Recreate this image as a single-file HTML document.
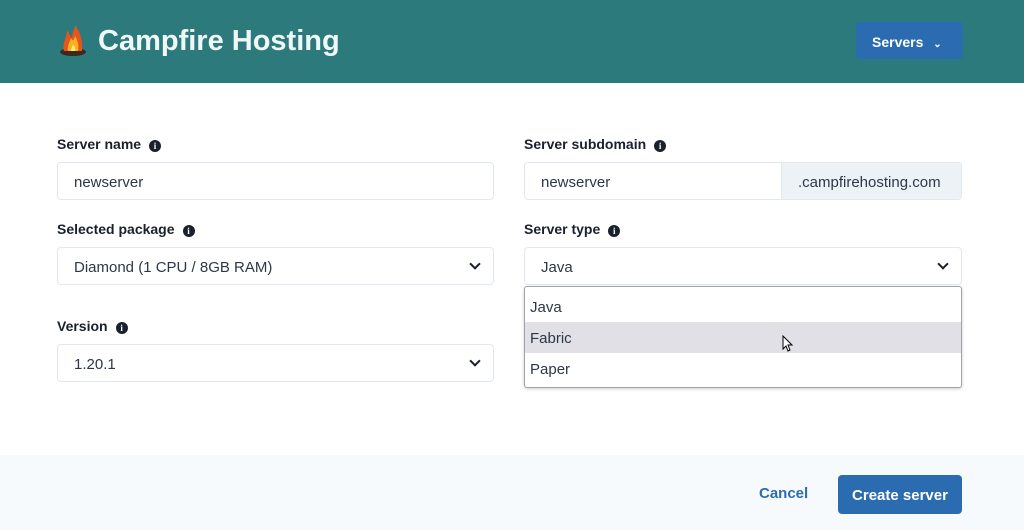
<!DOCTYPE html>
<html><head><style>
*{box-sizing:border-box;margin:0;padding:0}
body{width:1024px;height:530px;background:#fff;font-family:"Liberation Sans",sans-serif;position:relative;overflow:hidden;color:#1a202c}
.hdr{position:absolute;left:0;top:0;width:1024px;height:83px;background:#2c7a7b}
.logo{position:absolute;left:98px;top:25px;font-size:29px;font-weight:bold;color:#f0f7f8}
.srv{position:absolute;left:856px;top:22px;width:107px;height:37px;background:#2b6cb0;border-radius:4px;color:#fff;font-size:14px;font-weight:bold;line-height:40px;padding-left:16px}
.lbl{position:absolute;font-size:14px;font-weight:bold;color:#1a202c}
.i{display:inline-block;width:12px;height:12px;border-radius:50%;background:#1a202c;color:#fff;font-size:9px;text-align:center;line-height:12px;margin-left:8px;vertical-align:0px;font-family:"Liberation Serif",serif}
.inp{position:absolute;height:38px;border:1px solid #e2e8f0;border-radius:4px;font-size:15px;color:#2d3748;line-height:40px;padding-left:16px;background:#fff}
.chev{position:absolute;right:14px;width:8px;height:8px;border-right:2px solid #1a202c;border-bottom:2px solid #1a202c;transform:rotate(45deg);top:12px}
.dd{position:absolute;left:524px;top:286px;width:438px;height:102px;border:1px solid #a0a4a8;border-radius:3px;background:#fff;box-shadow:0 1px 3px rgba(0,0,0,.2);font-size:15px;color:#2d3748}
.dd div{height:31px;line-height:33px;padding-left:5px}
.ftr{position:absolute;left:0;top:455px;width:1024px;height:75px;background:#f7fafc}
</style></head><body>
<div class="hdr">
<svg style="position:absolute;left:58px;top:24px" width="30" height="32" viewBox="0 0 30 32"><ellipse cx="15" cy="28" rx="13" ry="4" fill="#3a2a22"/><path d="M6 27 C4 18 9 14 9 6 C12 10 12 13 14 14 C14 8 17 5 17 1 C21 7 25 14 24 27Z" fill="#e8541c"/><path d="M10 27 C9 21 12 18 13 14 C15 18 16 16 17 12 C20 17 21 22 20 27Z" fill="#f6b31c"/><path d="M13 27 C13 24 15 22 15 20 C17 23 18 25 17 27Z" fill="#fde68a"/></svg>
<div class="logo">Campfire Hosting</div>
<div class="srv">Servers <span style="font-size:10px;margin-left:6px">⌄</span></div>
</div>
<div class="lbl" style="left:57px;top:136px">Server name<span class="i">i</span></div>
<div class="inp" style="left:57px;top:162px;width:437px">newserver</div>
<div class="lbl" style="left:524px;top:136px">Server subdomain<span class="i">i</span></div>
<div class="inp" style="left:524px;top:162px;width:438px">newserver</div>
<div style="position:absolute;left:781px;top:163px;width:180px;height:36px;background:#edf2f7;border-left:1px solid #e2e8f0;font-size:15px;color:#2d3748;line-height:40px;padding-left:16px;border-radius:0 4px 4px 0">.campfirehosting.com</div>
<div class="lbl" style="left:57px;top:221px">Selected package<span class="i">i</span></div>
<div class="inp" style="left:57px;top:247px;width:437px">Diamond (1 CPU / 8GB RAM)<span class="chev"></span></div>
<div class="lbl" style="left:524px;top:221px">Server type<span class="i">i</span></div>
<div class="inp" style="left:524px;top:247px;width:438px">Java<span class="chev"></span></div>
<div class="lbl" style="left:57px;top:318px">Version<span class="i">i</span></div>
<div class="inp" style="left:57px;top:344px;width:437px">1.20.1<span class="chev"></span></div>
<div class="dd"><div style="margin-top:4px">Java</div><div style="background:#e0e0e6">Fabric</div><div>Paper</div></div>
<svg style="position:absolute;left:782px;top:335px" width="12" height="18" viewBox="0 0 12 18"><path d="M1 1 L1 14 L4 11 L6 16 L8 15 L6 10 L10 10Z" fill="#fff" stroke="#000" stroke-width="1"/></svg>
<div class="ftr"></div>
<div style="position:absolute;left:759px;top:485px;font-size:15px;font-weight:bold;color:#2b6cb0">Cancel</div>
<div style="position:absolute;left:838px;top:475px;width:124px;height:39px;background:#2b6cb0;border-radius:4px;color:#fff;font-size:15px;font-weight:bold;text-align:center;line-height:42px">Create server</div>
</body></html>
